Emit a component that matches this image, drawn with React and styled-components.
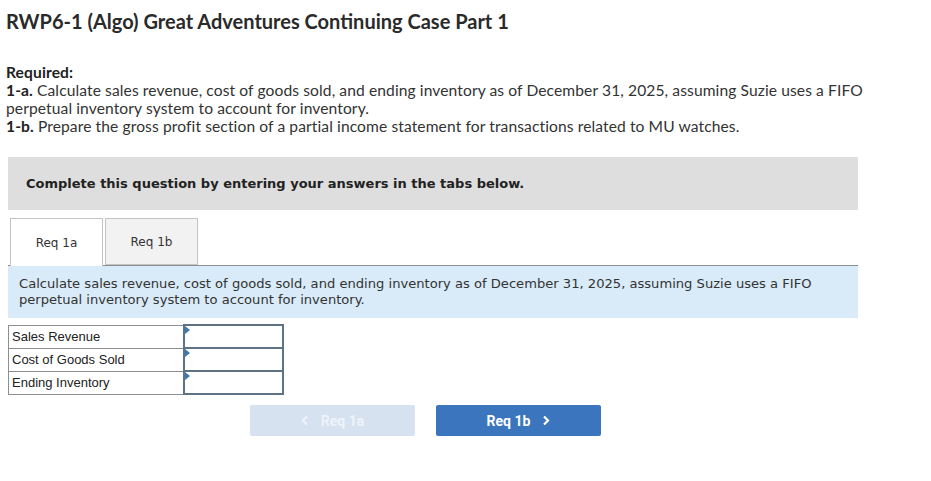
import React from 'react'
import styled, { createGlobalStyle } from 'styled-components'

const GlobalStyle = createGlobalStyle`
  body {
    margin: 0;
    background: #fff;
    color: #333;
  }
`

const Page = styled.div`
  width: 931px;
  padding: 10px 0 0 0;
`

const Title = styled.h1`
  font-family: Lato, "Open Sans", sans-serif;
  font-weight: 700;
  font-size: 20px;
  color: #2a2a2a;
  margin: 0 0 0 6px;
  line-height: 22px;
`

const Required = styled.div`
  font-family: Lato, "Open Sans", sans-serif;
  font-size: 15.6px;
  letter-spacing: 0.1px;
  line-height: 18px;
  color: #333;
  margin: 31px 0 0 6px;
  width: 900px;
  b { font-weight: 700; color: #222; }
`

const Instruction = styled.div`
  margin: 22px 0 0 8px;
  width: 850px;
  height: 53px;
  background: #dedede;
  display: flex;
  align-items: center;
  padding-left: 18px;
  box-sizing: border-box;
  font-family: "DejaVu Sans", Verdana, sans-serif;
  font-weight: 700;
  font-size: 13px;
  color: #222;
`

const Tabs = styled.div`
  display: flex;
  gap: 2px;
  margin: 8px 0 0 10px;
  height: 47px;
  position: relative;
  z-index: 1;
`

const Tab = styled.div`
  width: 93px;
  height: ${p => (p.$active ? '48px' : '47px')};
  box-sizing: border-box;
  border: 1px solid #c4c4c4;
  border-bottom: ${p => (p.$active ? 'none' : '1px solid #c4c4c4')};
  background: ${p => (p.$active ? '#fff' : '#f2f2f2')};
  display: flex;
  align-items: center;
  justify-content: center;
  font-family: "DejaVu Sans", Verdana, sans-serif;
  font-size: 12px;
  color: #333;
`

const Panel = styled.div`
  margin-left: 8px;
  width: 850px;
  height: 53px;
  box-sizing: border-box;
  background: #d9ebf9;
  border-top: 1px solid #8a9096;
  padding: 10px 40px 0 11px;
  font-family: "DejaVu Sans", Verdana, sans-serif;
  font-size: 13.1px;
  line-height: 16px;
  color: #333;
`

const Table = styled.table`
  margin: 6px 0 0 8px;
  border-collapse: collapse;
  font-family: "Liberation Sans", Arial, sans-serif;
  font-size: 13px;
  color: #222;
`

const LabelCell = styled.td`
  width: 175px;
  height: 23px;
  box-sizing: border-box;
  border: 1px solid #8a8f94;
  padding: 0 3px;
  line-height: 21px;
`

const InputCell = styled.td`
  width: 99px;
  height: 23px;
  box-sizing: border-box;
  border: 2px solid #5d7285;
  position: relative;
  padding: 0;
  background: #fff;
`

const Marker = styled.span`
  position: absolute;
  left: 0;
  top: 0;
  width: 0;
  height: 0;
  border-top: 4px solid transparent;
  border-bottom: 4px solid transparent;
  border-left: 5px solid #3d78b5;
`

const Nav = styled.div`
  display: flex;
  gap: 21px;
  margin: 10px 0 0 250px;
`

const NavButton = styled.div`
  width: 165px;
  height: 31px;
  border-radius: 2px;
  background: ${p => (p.$disabled ? '#d6e2f0' : '#3a75bd')};
  color: ${p => (p.$disabled ? '#eef3fa' : '#fff')};
  display: flex;
  align-items: center;
  justify-content: center;
  gap: 12px;
  font-family: Roboto, "Liberation Sans", sans-serif;
  font-weight: 700;
  font-size: 14px;
`

const Chevron = ({ dir }) => (
  <svg width="8" height="11" viewBox="0 0 8 11">
    <path
      d={dir === 'left' ? 'M6 1.5 L2 5.5 L6 9.5' : 'M2 1.5 L6 5.5 L2 9.5'}
      fill="none"
      stroke="currentColor"
      strokeWidth="2.2"
    />
  </svg>
)

const rows = ['Sales Revenue', 'Cost of Goods Sold', 'Ending Inventory']

export default function App() {
  return (
    <Page>
      <GlobalStyle />
      <Title>RWP6-1 (Algo) Great Adventures Continuing Case Part 1</Title>
      <Required>
        <b>Required:</b>
        <br />
        <b>1-a.</b> Calculate sales revenue, cost of goods sold, and ending inventory as of December 31, 2025, assuming Suzie uses a FIFO perpetual inventory system to account for inventory.
        <br />
        <b>1-b.</b> Prepare the gross profit section of a partial income statement for transactions related to MU watches.
      </Required>
      <Instruction>Complete this question by entering your answers in the tabs below.</Instruction>
      <Tabs>
        <Tab $active>Req 1a</Tab>
        <Tab>Req 1b</Tab>
      </Tabs>
      <Panel>
        Calculate sales revenue, cost of goods sold, and ending inventory as of December 31, 2025, assuming Suzie uses a FIFO perpetual inventory system to account for inventory.
      </Panel>
      <Table>
        <tbody>
          {rows.map(r => (
            <tr key={r}>
              <LabelCell>{r}</LabelCell>
              <InputCell><Marker /></InputCell>
            </tr>
          ))}
        </tbody>
      </Table>
      <Nav>
        <NavButton $disabled><Chevron dir="left" />Req 1a</NavButton>
        <NavButton>Req 1b<Chevron dir="right" /></NavButton>
      </Nav>
    </Page>
  )
}
